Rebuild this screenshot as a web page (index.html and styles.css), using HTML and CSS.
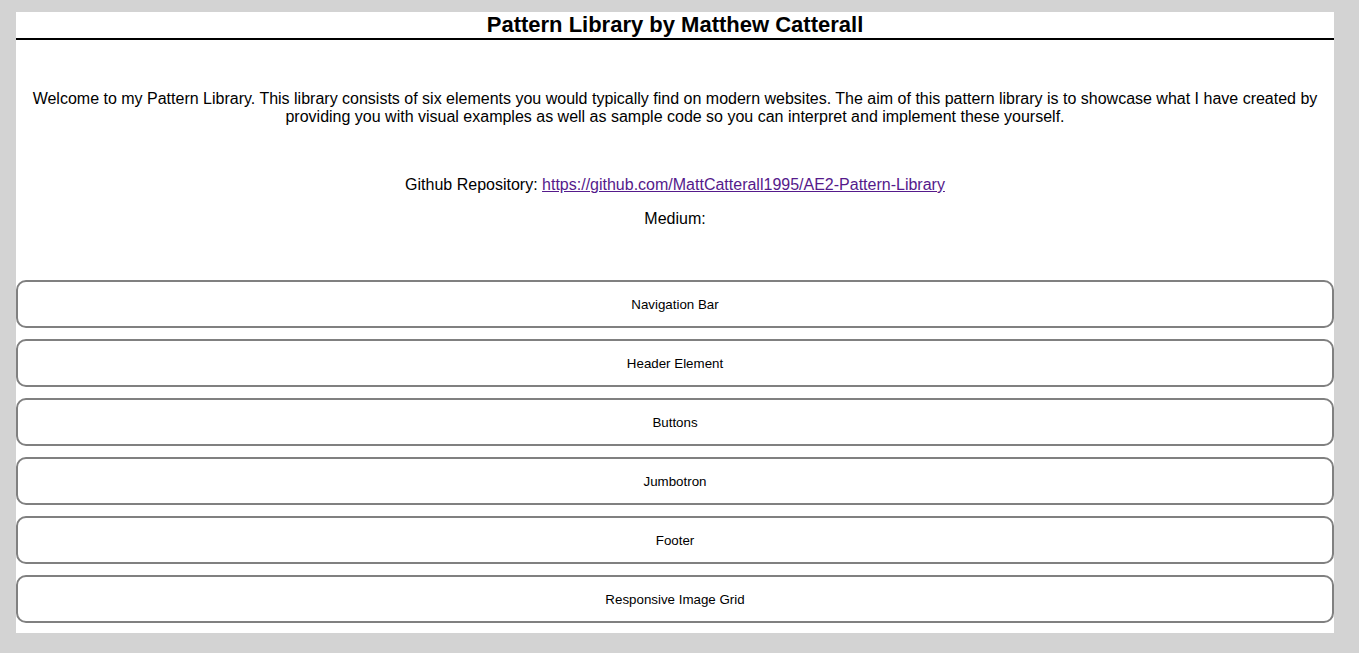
FILE: index.html
```html
<!DOCTYPE html>
<html lang="en">
<head>
<meta charset="utf-8">
<title>Pattern Library by Matthew Catterall</title>
<link rel="stylesheet" href="styles.css">
</head>
<body>
<div class="page">
  <header class="site-header">
    <h1 class="title">Pattern Library by Matthew Catterall</h1>
  </header>
  <section class="intro">
    <p class="welcome">Welcome to my Pattern Library. This library consists of six elements you would typically find on modern websites. The aim of this pattern library is to showcase what I have created by providing you with visual examples as well as sample code so you can interpret and implement these yourself.</p>
    <p class="repo">Github Repository: <a class="link" href="#">https://github.com/MattCatterall1995/AE2-Pattern-Library</a></p>
    <p class="medium">Medium:</p>
  </section>
  <nav class="elements">
    <button class="element-btn">Navigation Bar</button>
    <button class="element-btn">Header Element</button>
    <button class="element-btn">Buttons</button>
    <button class="element-btn">Jumbotron</button>
    <button class="element-btn">Footer</button>
    <button class="element-btn">Responsive Image Grid</button>
  </nav>
</div>
</body>
</html>
```

FILE: styles.css
```css
html, body {
  margin: 0;
  padding: 0;
}
body {
  background: #d3d3d3;
  padding: 12px 25px 20px 16px;
  font-family: "Liberation Sans", Arial, sans-serif;
  color: #000;
}
.page {
  background: #fff;
  padding-bottom: 10px;
}
.site-header {
  border-bottom: 2px solid #000;
}
.title {
  margin: 0;
  font-size: 22px;
  font-weight: bold;
  line-height: 26px;
  text-align: center;
}
.intro {
  text-align: center;
  font-size: 16px;
  line-height: 18px;
  padding-top: 50px;
  padding-bottom: 52px;
}
.intro p {
  margin: 0;
}
.welcome {
  padding: 0 8px;
}
.repo {
  margin-top: 50px !important;
}
.medium {
  margin-top: 16px !important;
}
.link {
  color: #551a8b;
  text-decoration: underline;
}
.elements {
  display: flex;
  flex-direction: column;
  gap: 11px;
}
.element-btn {
  display: block;
  width: 100%;
  height: 48px;
  background: #fff;
  border: 2px solid #808080;
  border-radius: 10px;
  font-family: "Liberation Sans", Arial, sans-serif;
  font-size: 13.333px;
  color: #000;
  text-align: center;
  padding: 0;
  margin: 0;
}
```
